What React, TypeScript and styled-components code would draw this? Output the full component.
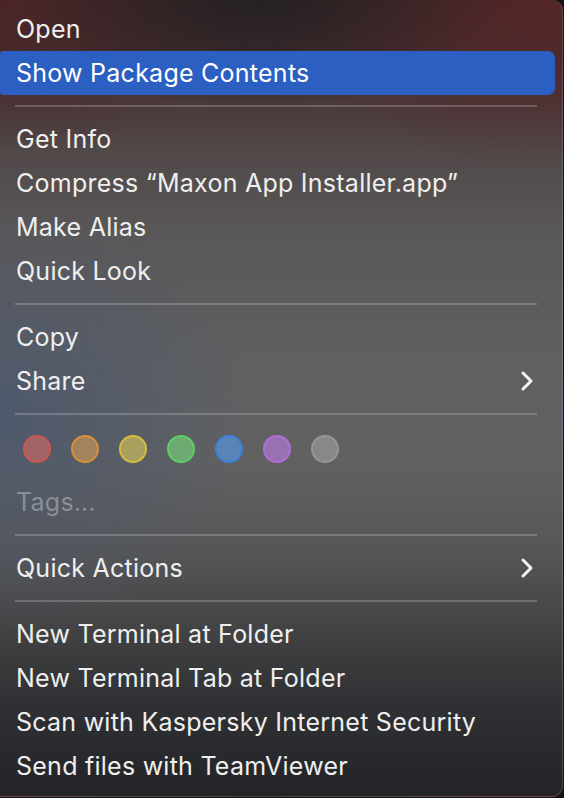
import styled, { createGlobalStyle } from 'styled-components';

const GlobalStyle = createGlobalStyle`
	html, body {
		margin: 0;
		padding: 0;
		background: #141414;
	}
	body {
		width: 564px;
		height: 798px;
		overflow: hidden;
		font-family: Inter, 'Noto Sans', 'Liberation Sans', sans-serif;
		-webkit-font-smoothing: antialiased;
	}
`;

type Entry =
	| { kind: 'item'; label: string; active?: boolean; submenu?: boolean }
	| { kind: 'sep' }
	| { kind: 'tags' };

const entries: Entry[] = [
	{ kind: 'item', label: 'Open' },
	{ kind: 'item', label: 'Show Package Contents', active: true },
	{ kind: 'sep' },
	{ kind: 'item', label: 'Get Info' },
	{ kind: 'item', label: 'Compress \u201cMaxon App Installer.app\u201d' },
	{ kind: 'item', label: 'Make Alias' },
	{ kind: 'item', label: 'Quick Look' },
	{ kind: 'sep' },
	{ kind: 'item', label: 'Copy' },
	{ kind: 'item', label: 'Share', submenu: true },
	{ kind: 'sep' },
	{ kind: 'tags' },
	{ kind: 'sep' },
	{ kind: 'item', label: 'Quick Actions', submenu: true },
	{ kind: 'sep' },
	{ kind: 'item', label: 'New Terminal at Folder' },
	{ kind: 'item', label: 'New Terminal Tab at Folder' },
	{ kind: 'item', label: 'Scan with Kaspersky Internet Security' },
	{ kind: 'item', label: 'Send files with TeamViewer' },
];

// fill + ring of each finder tag colour
const tagColors = [
	['#a56566', '#d4564f'],
	['#a7865e', '#de9236'],
	['#aea45f', '#ddc23c'],
	['#70ad73', '#5fd364'],
	['#5b86bb', '#3c82e2'],
	['#9a72b6', '#b56fe0'],
	['#8b8b8b', '#999999'],
];

function Chevron() {
	return (
		<svg width='14' height='22' viewBox='0 0 14 22'>
			<path
				d='M3 3 L11 11 L3 19'
				fill='none'
				stroke='#f4f4f4'
				strokeWidth='3'
				strokeLinecap='round'
				strokeLinejoin='round'
			/>
		</svg>
	);
}

export default function App() {
	return (
		<>
			<GlobalStyle />
			<Menu>
				{entries.map((entry, i) => {
					if (entry.kind === 'sep') return <Separator key={i} />;
					if (entry.kind === 'tags')
						return (
							<TagsBlock key={i}>
								<DotRow>
									{tagColors.map(([fill, ring]) => (
										<Dot key={fill} fill={fill} ring={ring} />
									))}
								</DotRow>
								<TagsLabel>Tags…</TagsLabel>
							</TagsBlock>
						);
					return (
						<Item key={i} className={entry.active ? 'active' : ''}>
							<span>{entry.label}</span>
							{entry.submenu && <Chevron />}
						</Item>
					);
				})}
			</Menu>
		</>
	);
}

const Menu = styled.div`
	display: flex;
	flex-direction: column;
	box-sizing: border-box;
	width: 563px;
	height: 797px;
	padding: 7px 0 8px;
	border: 1px solid rgba(255, 255, 255, 0.16);
	border-left: none;
	border-top: none;
	border-radius: 0 11px 11px 0;
	overflow: hidden;
	background:
		radial-gradient(ellipse 240px 110px at 46% 0%, rgba(36, 32, 34, 0.95), rgba(36, 32, 34, 0) 100%),
		radial-gradient(ellipse 300px 170px at 100% 0%, rgba(90, 36, 38, 0.8), rgba(90, 36, 38, 0) 100%),
		radial-gradient(ellipse 260px 150px at 0% 0%, rgba(78, 36, 37, 0.75), rgba(78, 36, 37, 0) 100%),
		radial-gradient(ellipse 260px 220px at 0% 52%, rgba(72, 86, 112, 0.75), rgba(72, 86, 112, 0) 100%),
		linear-gradient(
			180deg,
			#3e2829 0%,
			#463234 10%,
			#524a4a 20%,
			#5a5858 30%,
			#606060 45%,
			#616161 58%,
			#585858 68%,
			#454546 78%,
			#303134 88%,
			#232427 100%
		);
`;

const Item = styled.div`
	display: flex;
	align-items: center;
	justify-content: space-between;
	flex: 0 0 44px;
	margin-right: 7px;
	padding: 0 21px 0 16px;
	border-radius: 3px 7px 7px 3px;
	color: #efefef;
	font-size: 25px;
	letter-spacing: 0.25px;
	white-space: nowrap;

	&.active {
		background: #2b5fc2;
		color: #ffffff;
	}
`;

const Separator = styled.div`
	flex: 0 0 22px;
	display: flex;
	align-items: center;
	padding: 0 25px 0 15px;

	&::after {
		content: '';
		flex: 1;
		height: 2px;
		background: rgba(255, 255, 255, 0.2);
	}
`;

const TagsBlock = styled.div`
	display: flex;
	flex-direction: column;
`;

const DotRow = styled.div`
	display: flex;
	gap: 20px;
	padding: 10px 0 17px 23px;
`;

const Dot = styled.div<{ fill: string; ring: string }>`
	width: 28px;
	height: 28px;
	box-sizing: border-box;
	border-radius: 50%;
	background: ${(p) => p.fill};
	border: 2px solid ${(p) => p.ring};
	opacity: 0.95;
`;

const TagsLabel = styled.div`
	display: flex;
	align-items: center;
	height: 44px;
	padding-left: 16px;
	color: rgba(200, 202, 210, 0.48);
	font-size: 25px;
	letter-spacing: 0.25px;
`;
